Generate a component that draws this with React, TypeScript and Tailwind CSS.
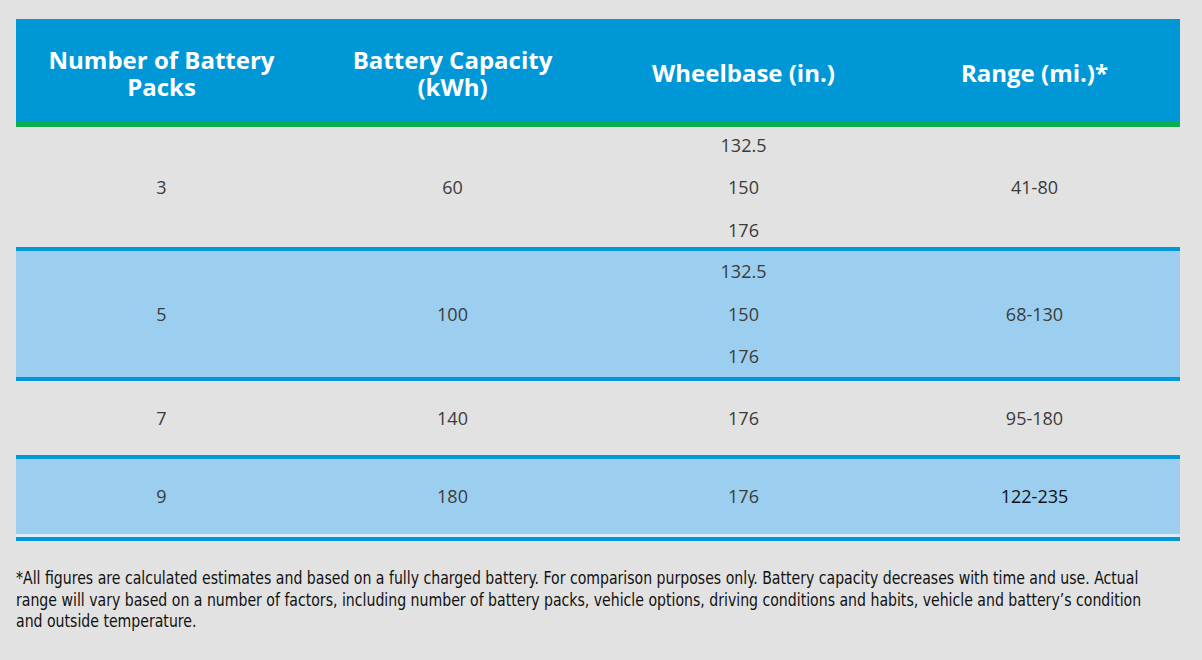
export default function App() {
  const head = "flex items-center justify-center text-center text-white font-bold text-[24px] leading-[27px] pt-[5px]";
  const cell = "flex flex-col items-center justify-center text-[18px] leading-[25px] text-[#3b3b3b]";
  const note = "block whitespace-nowrap origin-left scale-x-[0.87]";

  return (
    <div className="w-full h-[660px] bg-[#e2e2e2] pt-[19px] px-[16px]" style={{ fontFamily: '"Open Sans", sans-serif' }}>
      <div className="w-[1164px]">
        {/* Header */}
        <div className="grid grid-cols-4 h-[102px] bg-[#0097d7]">
          <div className={head}>
            <span>
              Number of Battery
              <br />
              Packs
            </span>
          </div>
          <div className={head}>
            <span>
              Battery Capacity
              <br />
              (kWh)
            </span>
          </div>
          <div className={head}>
            <span>Wheelbase (in.)</span>
          </div>
          <div className={head}>
            <span>Range (mi.)*</span>
          </div>
        </div>
        <div className="h-[6px] bg-[#0bb04b]" />
        <div className="h-[1px] bg-[#ebebeb]" />

        {/* Row 3 packs */}
        <div className="grid grid-cols-4 h-[119px]">
          <div className={cell}>3</div>
          <div className={cell}>60</div>
          <div className={`${cell} gap-[17.5px]`}>
            <span>132.5</span>
            <span>150</span>
            <span>176</span>
          </div>
          <div className={cell}>41-80</div>
        </div>
        <div className="h-[4px] bg-[#0097d7]" />

        {/* Row 5 packs */}
        <div className="grid grid-cols-4 h-[126px] bg-[#9ccfef]">
          <div className={cell}>5</div>
          <div className={cell}>100</div>
          <div className={`${cell} gap-[17.5px]`}>
            <span>132.5</span>
            <span>150</span>
            <span>176</span>
          </div>
          <div className={cell}>68-130</div>
        </div>
        <div className="h-[4px] bg-[#0097d7]" />

        {/* Row 7 packs */}
        <div className="grid grid-cols-4 h-[74px]">
          <div className={cell}>7</div>
          <div className={cell}>140</div>
          <div className={cell}>176</div>
          <div className={cell}>95-180</div>
        </div>
        <div className="h-[4px] bg-[#0097d7]" />

        {/* Row 9 packs */}
        <div className="grid grid-cols-4 h-[75px] bg-[#9ccfef]">
          <div className={cell}>9</div>
          <div className={cell}>180</div>
          <div className={cell}>176</div>
          <div className={`${cell} text-[#111111]`}>122-235</div>
        </div>
        <div className="h-[3px] bg-[#d9edf9]" />
        <div className="h-[4px] bg-[#0097d7]" />

        {/* Footnote */}
        <div
          className="mt-[26px] text-[18px] leading-[21.5px] text-[#111111]"
          style={{ fontFamily: '"DejaVu Sans Condensed", "DejaVu Sans", sans-serif' }}
        >
          <span className={note}>
            *All figures are calculated estimates and based on a fully charged battery. For comparison purposes only. Battery capacity decreases with time and use. Actual
          </span>
          <span className={note}>
            range will vary based on a number of factors, including number of battery packs, vehicle options, driving conditions and habits, vehicle and battery’s condition
          </span>
          <span className={note}>and outside temperature.</span>
        </div>
      </div>
    </div>
  );
}
